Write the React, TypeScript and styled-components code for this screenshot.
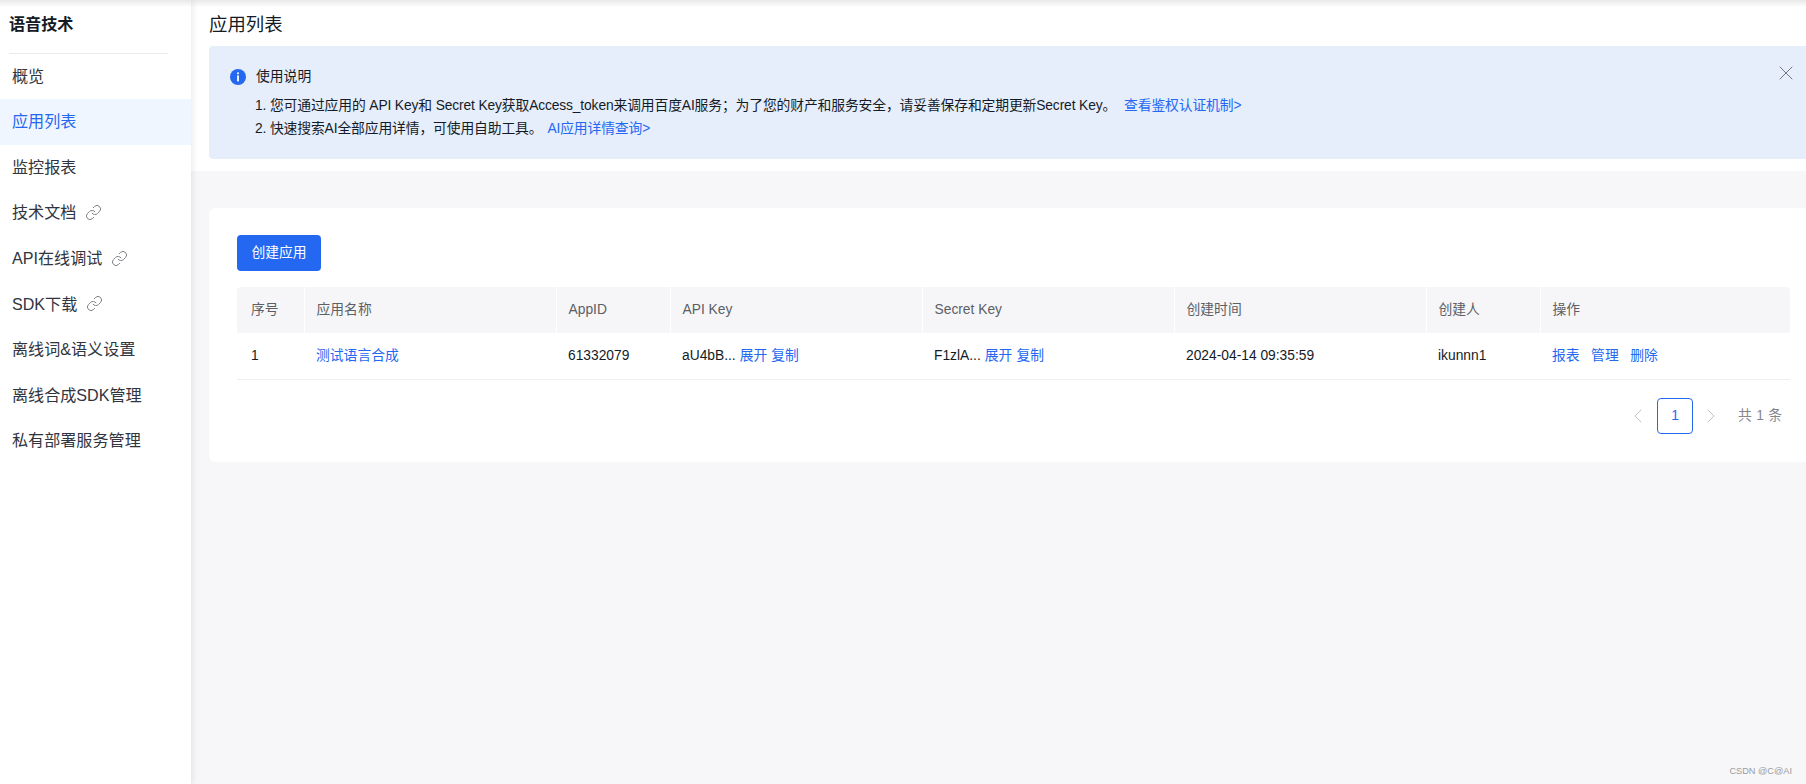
import React from "react";
import styled, { createGlobalStyle } from "styled-components";
import { ChevronLeft, ChevronRight, Link, X } from "lucide-react";

const blue = "#2468f2";
const textDark = "#151b26";
const textGrey = "#5c5f66";
const pageGrey = "#f7f7f9";

const GlobalStyle = createGlobalStyle`
  html, body {
    margin: 0;
    padding: 0;
    background: ${pageGrey};
    font-family: "Liberation Sans", "Noto Sans CJK SC", sans-serif;
  }
  * { box-sizing: border-box; }
`;

const Page = styled.div`
  position: relative;
  display: flex;
  width: 1806px;
  height: 784px;
  overflow: hidden;
  background: ${pageGrey};
`;

const TopShade = styled.div`
  position: absolute;
  top: 0;
  left: 0;
  right: 0;
  height: 7px;
  background: linear-gradient(to bottom, rgba(0, 0, 0, 0.09), rgba(0, 0, 0, 0));
  z-index: 3;
`;

const Sidebar = styled.aside`
  width: 191px;
  flex-shrink: 0;
  background: #fff;
  box-shadow: 2px 0 6px rgba(7, 12, 20, 0.08);
  z-index: 2;
`;

const SideTitle = styled.div`
  height: 54px;
  margin: 0 23px -0.6px 9px;
  padding-top: 13px;
  font-size: 16.1px;
  line-height: 22px;
  font-weight: 700;
  color: ${textDark};
  border-bottom: 1px solid #e8e9eb;
`;

const SideItem = styled.div<{ $active?: boolean }>`
  display: flex;
  align-items: center;
  gap: 9px;
  height: 45.6px;
  padding: 0 0 1px 12px;
  font-size: 16.1px;
  line-height: 20px;
  color: ${(p) => (p.$active ? blue : "#303540")};
  background: ${(p) => (p.$active ? "#f0f6ff" : "transparent")};
  svg {
    color: #7d8086;
  }
`;

const Main = styled.main`
  flex: 1;
  min-width: 0;
`;

const Header = styled.header`
  height: 171px;
  padding: 14px 0 0 18px;
  background: #fff;
`;

const PageTitle = styled.h1`
  margin: 0 0 11px;
  height: 21px;
  font-size: 18.4px;
  line-height: 21px;
  font-weight: 400;
  color: ${textDark};
`;

const Notice = styled.section`
  position: relative;
  height: 113px;
  padding: 21px 0 0 21px;
  background: #e6eefc;
  border-radius: 4px 0 0 4px;
  font-size: 13.8px;
  color: ${textDark};
`;

const NoticeHead = styled.div`
  display: flex;
  align-items: center;
  gap: 10px;
  height: 20px;
  line-height: 20px;
  margin-bottom: 7px;
`;

const NoticeLine = styled.div`
  padding-left: 25px;
  height: 23px;
  line-height: 23px;
  letter-spacing: -0.13px;
  white-space: nowrap;
`;

const CloseButton = styled.span`
  position: absolute;
  top: 15px;
  right: 8px;
  display: flex;
  color: #74777e;
`;

const TextLink = styled.a`
  color: ${blue};
  text-decoration: none;
`;

const NoticeLink = styled(TextLink)<{ $gap: number }>`
  margin-left: ${(p) => p.$gap}px;
`;

const Card = styled.section`
  margin: 37px 0 0 18px;
  height: 254px;
  padding: 27px 16px 0 28px;
  background: #fff;
  border-radius: 6px 0 0 6px;
`;

const PrimaryButton = styled.button`
  display: block;
  width: 84px;
  height: 36px;
  padding: 0;
  border: 0;
  border-radius: 4px;
  background: ${blue};
  color: #fff;
  font-family: inherit;
  font-size: 13.8px;
  line-height: 18px;
`;

const Table = styled.div`
  margin-top: 16px;
  display: grid;
  grid-template-columns: 68px 252px 114px 252px 252px 252px 114px 249px;
  font-size: 13.8px;
  line-height: 18px;
`;

const HeadCell = styled.div<{ $first?: boolean; $last?: boolean }>`
  display: flex;
  align-items: center;
  height: 46px;
  padding: 0 0 1px ${(p) => (p.$first ? "14px" : "11.5px")};
  background: #f6f6f8;
  color: ${textGrey};
  border-right: ${(p) => (p.$last ? "0" : "1px solid #fff")};
  border-radius: ${(p) => (p.$first ? "4px 0 0 0" : p.$last ? "0 4px 0 0" : "0")};
`;

const BodyCell = styled.div<{ $first?: boolean }>`
  display: flex;
  align-items: center;
  gap: 4px;
  height: 47px;
  padding: 0 0 1px ${(p) => (p.$first ? "14px" : "11px")};
  color: ${textDark};
  border-bottom: 1px solid #eeeff1;
  white-space: nowrap;
`;

const ActionCell = styled(BodyCell)`
  gap: 11.5px;
`;

const Pager = styled.nav`
  display: flex;
  align-items: center;
  justify-content: flex-end;
  margin-top: 18px;
  padding-right: 8px;
  height: 36px;
  font-size: 13.8px;
  line-height: 18px;
  color: #84868c;
  svg {
    color: #bfc1c5;
  }
`;

const PageNumber = styled.span`
  display: flex;
  align-items: center;
  justify-content: center;
  width: 36px;
  height: 36px;
  margin: 0 6px 0 7px;
  border: 1px solid ${blue};
  border-radius: 4px;
  color: ${blue};
  font-size: 13.8px;
`;

const Total = styled.span`
  margin-left: 15px;
  word-spacing: 0.5px;
`;

const Watermark = styled.span`
  position: absolute;
  right: 14px;
  bottom: 7px;
  font-size: 9.2px;
  line-height: 12px;
  color: #9a9ca0;
`;

const InfoIcon = () => (
  <svg width="16" height="16" viewBox="0 0 16 16">
    <circle cx="8" cy="8" r="8" fill={blue} />
    <rect x="7.1" y="3.4" width="1.8" height="1.8" fill="#fff" />
    <rect x="7.1" y="6.4" width="1.8" height="6" fill="#fff" />
  </svg>
);

const sideItems = [
  { label: "概览" },
  { label: "应用列表", active: true },
  { label: "监控报表" },
  { label: "技术文档", link: true },
  { label: "API在线调试", link: true },
  { label: "SDK下载", link: true },
  { label: "离线词&语义设置" },
  { label: "离线合成SDK管理" },
  { label: "私有部署服务管理" },
];

const headers = ["序号", "应用名称", "AppID", "API Key", "Secret Key", "创建时间", "创建人", "操作"];

const App = () => (
  <Page>
    <GlobalStyle />
    <TopShade />
    <Sidebar>
      <SideTitle>语音技术</SideTitle>
      {sideItems.map((item) => (
        <SideItem key={item.label} $active={item.active}>
          {item.label}
          {item.link && <Link size={17} strokeWidth={1.4} />}
        </SideItem>
      ))}
    </Sidebar>
    <Main>
      <Header>
        <PageTitle>应用列表</PageTitle>
        <Notice>
          <NoticeHead>
            <InfoIcon />
            使用说明
          </NoticeHead>
          <NoticeLine>
            1. 您可通过应用的 API Key和 Secret Key获取Access_token来调用百度AI服务；为了您的财产和服务安全，请妥善保存和定期更新Secret Key。
            <NoticeLink $gap={8}>查看鉴权认证机制&gt;</NoticeLink>
          </NoticeLine>
          <NoticeLine>
            2. 快速搜索AI全部应用详情，可使用自助工具。
            <NoticeLink $gap={5}>AI应用详情查询&gt;</NoticeLink>
          </NoticeLine>
          <CloseButton>
            <X size={24} strokeWidth={1} />
          </CloseButton>
        </Notice>
      </Header>
      <Card>
        <PrimaryButton>创建应用</PrimaryButton>
        <Table>
          {headers.map((h, i) => (
            <HeadCell key={h} $first={i === 0} $last={i === headers.length - 1}>
              {h}
            </HeadCell>
          ))}
          <BodyCell $first>1</BodyCell>
          <BodyCell>
            <TextLink>测试语言合成</TextLink>
          </BodyCell>
          <BodyCell>61332079</BodyCell>
          <BodyCell>
            aU4bB...
            <TextLink>展开</TextLink>
            <TextLink>复制</TextLink>
          </BodyCell>
          <BodyCell>
            F1zlA...
            <TextLink>展开</TextLink>
            <TextLink>复制</TextLink>
          </BodyCell>
          <BodyCell>2024-04-14 09:35:59</BodyCell>
          <BodyCell>ikunnn1</BodyCell>
          <ActionCell>
            <TextLink>报表</TextLink>
            <TextLink>管理</TextLink>
            <TextLink>删除</TextLink>
          </ActionCell>
        </Table>
        <Pager>
          <ChevronLeft size={24} strokeWidth={1} />
          <PageNumber>1</PageNumber>
          <ChevronRight size={24} strokeWidth={1} />
          <Total>共 1 条</Total>
        </Pager>
      </Card>
    </Main>
    <Watermark>CSDN @C@AI</Watermark>
  </Page>
);

export default App;
